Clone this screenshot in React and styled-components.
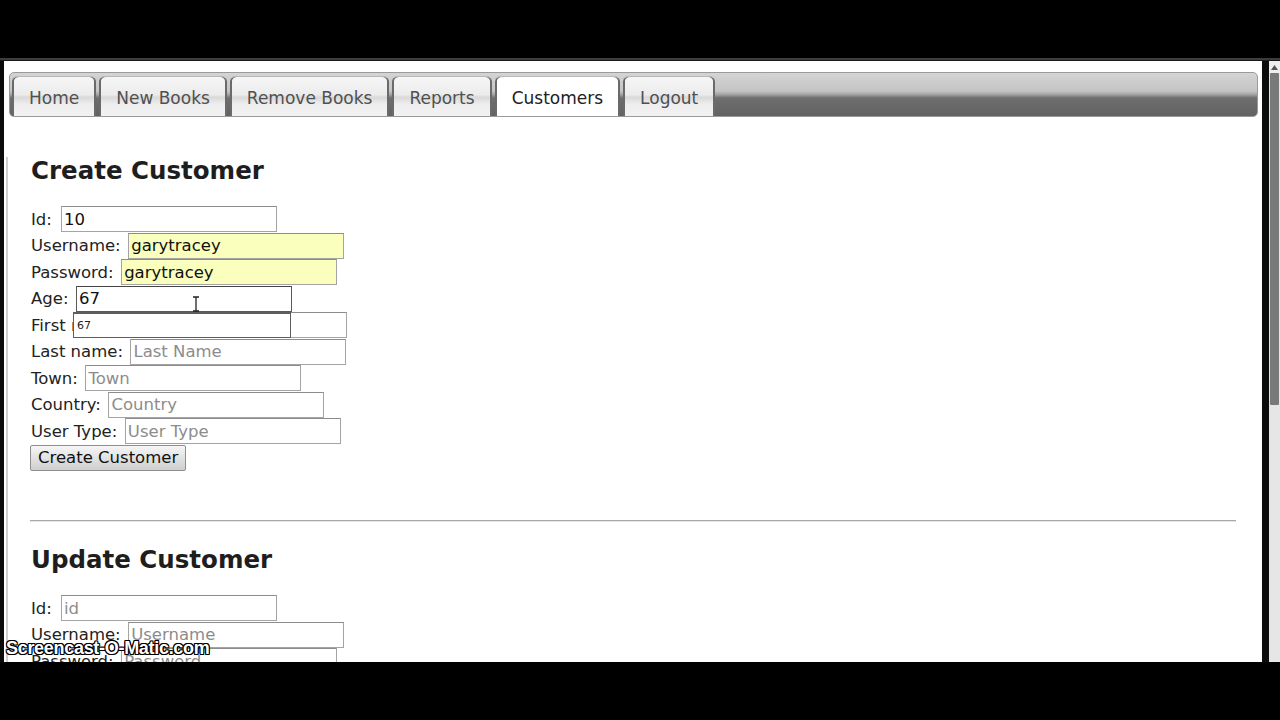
import styled, { createGlobalStyle } from "styled-components";

const GlobalStyle = createGlobalStyle`
  html, body {
    margin: 0;
    padding: 0;
    background: #000;
  }
  body {
    font-family: "DejaVu Sans", Verdana, sans-serif;
  }
`;

const tabs = ["Home", "New Books", "Remove Books", "Reports", "Customers", "Logout"];

export default function App() {
  return (
    <Screen>
      <GlobalStyle />
      <TopBand />
      <ChromeLine />
      <Viewport>
        <LeftGutter />
        <Page>
          <TabBar>
            {tabs.map((t) => (
              <Tab key={t} $active={t === "Customers"}>
                {t}
              </Tab>
            ))}
          </TabBar>
          <Content>
            <Section>
              <Title>Create Customer</Title>
              <Row>
                <Label $wide>Id:</Label>
                <Field defaultValue="10" />
              </Row>
              <Row>
                <Label>Username:</Label>
                <Field defaultValue="garytracey" $autofill />
              </Row>
              <Row>
                <Label>Password:</Label>
                <Field defaultValue="garytracey" $autofill />
              </Row>
              <Row>
                <Label>Age:</Label>
                <Field defaultValue="67" $focused />
                <IBeam viewBox="0 0 8 16">
                  <path d="M1 1h6M4 1v14M1 15h6" stroke="#222" strokeWidth="1.3" fill="none" />
                </IBeam>
              </Row>
              <Row>
                <Label>First name:</Label>
                <Field />
                <Suggest>67</Suggest>
              </Row>
              <Row>
                <Label>Last name:</Label>
                <Field placeholder="Last Name" />
              </Row>
              <Row>
                <Label>Town:</Label>
                <Field placeholder="Town" />
              </Row>
              <Row>
                <Label>Country:</Label>
                <Field placeholder="Country" />
              </Row>
              <Row>
                <Label>User Type:</Label>
                <Field placeholder="User Type" />
              </Row>
              <Row>
                <Button>Create Customer</Button>
              </Row>
            </Section>
            <Divider />
            <Section>
              <Title>Update Customer</Title>
              <Row>
                <Label $wide>Id:</Label>
                <Field placeholder="id" />
              </Row>
              <Row>
                <Label>Username:</Label>
                <Field placeholder="Username" />
              </Row>
              <Row>
                <Label>Password:</Label>
                <Field placeholder="Password" />
              </Row>
            </Section>
          </Content>
          <Watermark>Screencast-O-Matic.com</Watermark>
        </Page>
        <RightGutter />
        <ScrollTrack>
          <ScrollArrow>
            <svg width="7" height="5" viewBox="0 0 7 5">
              <path d="M0 5L3.5 0L7 5z" fill="#555" />
            </svg>
          </ScrollArrow>
          <ScrollThumb />
        </ScrollTrack>
      </Viewport>
      <BottomBand />
    </Screen>
  );
}

const Screen = styled.div`
  width: 1280px;
  height: 720px;
  display: flex;
  flex-direction: column;
  background: #000;
  overflow: hidden;
`;

const TopBand = styled.div`
  height: 58px;
  background: #000;
`;

const ChromeLine = styled.div`
  height: 3px;
  background: linear-gradient(#3c3c3c 0 2px, #1a1a1a 2px);
`;

const BottomBand = styled.div`
  height: 58px;
  background: #000;
`;

const Viewport = styled.div`
  height: 601px;
  display: flex;
`;

const LeftGutter = styled.div`
  width: 4px;
  background: #0a0a0a;
`;

const RightGutter = styled.div`
  width: 7px;
  background: #0c0c0c;
`;

const Page = styled.div`
  position: relative;
  width: 1258px;
  background: #fff;
  padding-top: 11px;
  box-sizing: border-box;
  overflow: hidden;
`;

const TabBar = styled.div`
  margin: 0 4px 0 5px;
  height: 45px;
  box-sizing: border-box;
  padding: 5px 0 0 2px;
  display: flex;
  align-items: flex-end;
  gap: 3px;
  border: 1px solid #9a9a9a;
  border-radius: 5px;
  background: linear-gradient(
    #d4d4d4 0%,
    #c4c4c4 42%,
    #a4a4a4 50%,
    #6e6e6e 58%,
    #626262 100%
  );
`;

const Tab = styled.div`
  height: 40px;
  box-sizing: border-box;
  padding: 3px 17px 0;
  display: flex;
  align-items: center;
  font-size: 17px;
  color: ${(p) => (p.$active ? "#222" : "#505050")};
  border-radius: 5px 5px 0 0;
  border-top: 1px solid #b8b8b8;
  box-shadow: inset 2px 0 0 #6a6a6a, inset -2px 0 0 #6a6a6a;
  background: ${(p) =>
    p.$active
      ? "#fff"
      : "linear-gradient(#f6f6f6 0%, #ececec 45%, #d9d9d9 52%, #eeeeee 70%, #f2f2f2 100%)"};
`;

const Content = styled.div`
  margin: 40px 0 0 2px;
  padding: 0 26px 0 23px;
  border-left: 2px solid #cfcfcf;
`;

const Section = styled.div`
  display: flex;
  flex-direction: column;
`;

const Title = styled.h2`
  margin: 0 0 21px;
  font-size: 24.5px;
  line-height: 28px;
  font-weight: bold;
  color: #1e1e1e;
`;

const Row = styled.div`
  position: relative;
  display: flex;
  align-items: center;
  gap: 7.5px;
  height: 26.5px;
`;

const Label = styled.span`
  font-size: 16.5px;
  color: #222;
  white-space: nowrap;
  margin-right: ${(p) => (p.$wide ? "1.5px" : "0")};
`;

const Field = styled.input`
  width: 216px;
  height: 26px;
  box-sizing: border-box;
  margin: 0;
  padding: 0 2px;
  font-family: "DejaVu Sans", Verdana, sans-serif;
  font-size: 16.5px;
  color: #111;
  outline: none;
  border: 1px solid ${(p) => (p.$focused ? "#5a5a5a" : "#a4a4a4")};
  border-top-color: ${(p) => (p.$focused ? "#444" : "#8c8c8c")};
  background: ${(p) => (p.$autofill ? "#faffbd" : "#fff")};
  &::placeholder {
    color: #8c8c8c;
  }
`;

const Suggest = styled.div`
  position: absolute;
  left: 42px;
  top: 0;
  width: 218px;
  height: 26px;
  box-sizing: border-box;
  border: 1px solid #5e5e5e;
  border-top-width: 2px;
  background: #fff;
  padding-left: 3px;
  display: flex;
  align-items: center;
  font-size: 11px;
  color: #222;
`;

const IBeam = styled.svg`
  position: absolute;
  left: 161px;
  top: 10px;
  width: 8px;
  height: 16px;
`;

const Button = styled.button`
  height: 26px;
  margin: 0 0 0 -1px;
  padding: 0 7px;
  font-family: "DejaVu Sans", Verdana, sans-serif;
  font-size: 16.5px;
  color: #111;
  border: 1px solid #8e8e8e;
  border-radius: 2px;
  background: linear-gradient(#f6f6f6, #dedede 60%, #cfcfcf);
`;

const Divider = styled.div`
  margin: 49px 0 24px -1px;
  height: 0;
  border-top: 1px solid #a8a8a8;
  border-bottom: 1px solid #e4e4e4;
`;

const Watermark = styled.div`
  position: absolute;
  left: 2px;
  top: 577px;
  font-family: "Liberation Sans", Arial, sans-serif;
  font-weight: bold;
  font-size: 18px;
  letter-spacing: -0.3px;
  color: #fff;
  text-shadow: 1px 1px 0 #000, -1px -1px 0 #000, 1px -1px 0 #000, -1px 1px 0 #000,
    0 1px 0 #000, 0 -1px 0 #000, 1px 0 0 #000, -1px 0 0 #000;
`;

const ScrollTrack = styled.div`
  width: 11px;
  display: flex;
  flex-direction: column;
  background: #e6e6e6;
`;

const ScrollArrow = styled.div`
  height: 12px;
  display: flex;
  align-items: center;
  justify-content: center;
  background: #eeeeee;
`;

const ScrollThumb = styled.div`
  height: 332px;
  margin: 0 1px;
  background: #777a78;
  border-radius: 1px;
`;
